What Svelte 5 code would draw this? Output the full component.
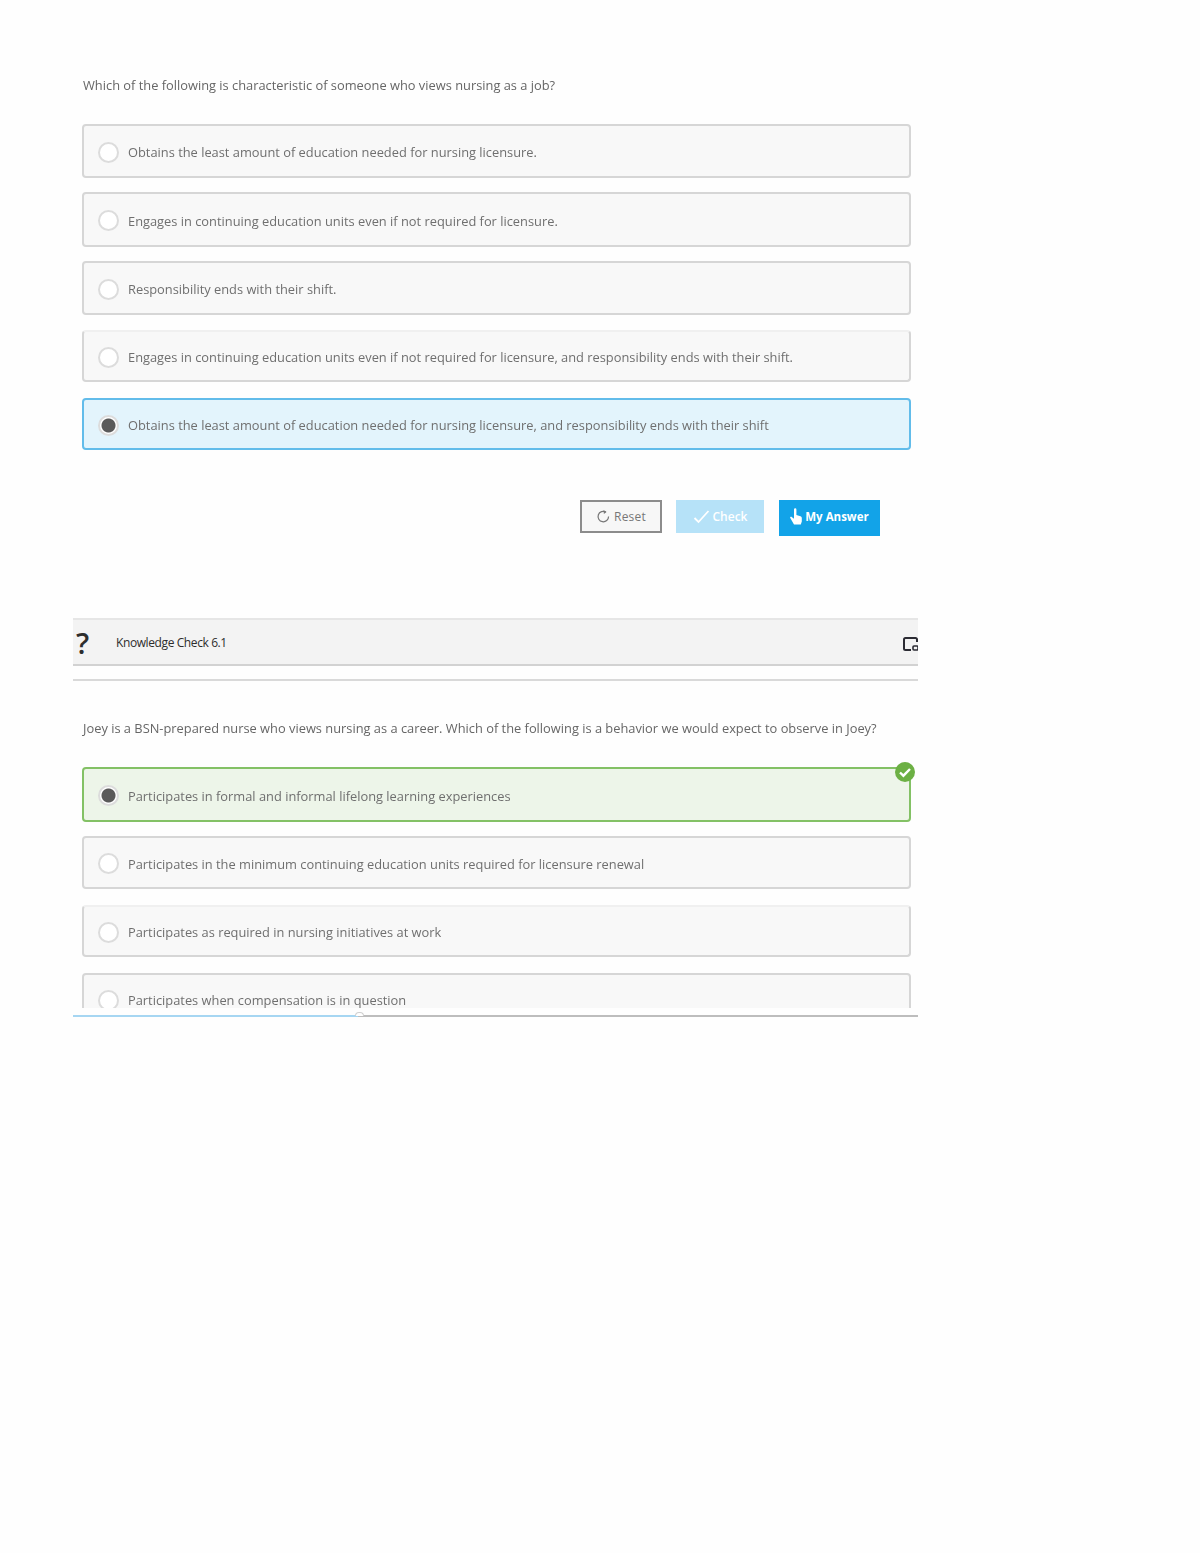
<script>
  const firstOptions = [
    { text: 'Obtains the least amount of education needed for nursing licensure.', size: 'tall' },
    { text: 'Engages in continuing education units even if not required for licensure.', size: 'taller' },
    { text: 'Responsibility ends with their shift.', size: 'tall' },
    { text: 'Engages in continuing education units even if not required for licensure, and responsibility ends with their shift.', size: 'short', extra: 'push-1', faint: true },
    { text: 'Obtains the least amount of education needed for nursing licensure, and responsibility ends with their shift', size: 'short', extra: 'push-2', state: 'selected' }
  ];

  const secondOptions = [
    { text: 'Participates in formal and informal lifelong learning experiences', size: 'taller', state: 'correct' },
    { text: 'Participates in the minimum continuing education units required for licensure renewal', size: 'mid' },
    { text: 'Participates as required in nursing initiatives at work', size: 'short', extra: 'push-2', faint: true },
    { text: 'Participates when compensation is in question', size: 'short', extra: 'push-2' }
  ];
</script>

{#snippet option(item)}
  <div class="option {item.size} {item.extra ?? ''} {item.state ?? ''}" class:faint={item.faint}>
    <span class="radio"></span>
    <span class="label">{item.text}</span>
    {#if item.state === 'correct'}
      <svg class="tick" viewBox="0 0 20 20" width="20" height="20">
        <circle cx="10" cy="10" r="10" fill="#6cb044" />
        <path d="M5 10.5l3.4 3.2L15 7" fill="none" stroke="#fff" stroke-width="2.4" />
      </svg>
    {/if}
  </div>
{/snippet}

<div class="page">
  <section class="question first">
    <p class="prompt">Which of the following is characteristic of someone who views nursing as a job?</p>
    <div class="options">
      {#each firstOptions as item}
        {@render option(item)}
      {/each}
    </div>
    <div class="actions">
      <button class="btn reset">
        <svg viewBox="0 0 16 16" width="15" height="15">
          <path d="M10.6 3.2A5.6 5.6 0 1 0 13.4 8" fill="none" stroke="#777" stroke-width="1.3" />
          <path d="M8 1l3.2 2.2L8.4 5.4z" fill="#777" />
        </svg>
        Reset
      </button>
      <button class="btn check">
        <svg viewBox="0 0 16 14" width="17" height="14">
          <path d="M1 8l4 4L15 1" fill="none" stroke="#fff" stroke-width="1.8" />
        </svg>
        Check
      </button>
      <button class="btn answer">
        <svg viewBox="0 0 12 17" width="12" height="17">
          <path d="M4 1.5a1.2 1.2 0 0 1 2.4 0V7l4 1.2c1 .3 1.4.9 1.4 1.8v3.5l-1 3H4l-4-7 1-1 3 2.2z" fill="#fff" />
        </svg>
        My Answer
      </button>
    </div>
  </section>

  <header class="bar">
    <span class="mark">?</span>
    <span class="title">Knowledge Check 6.1</span>
    <svg class="expand" viewBox="0 0 15 14" width="15" height="14">
      <path d="M14 5V2.5A1.5 1.5 0 0 0 12.500 1H2.500A1.500 1.500 0 0 0 1 2.500V11.500A1.500 1.500 0 0 0 2.500 13H8" fill="none" stroke="#2b2b33" stroke-width="2" />
      <rect x="10" y="9" width="5" height="4" rx="1" fill="none" stroke="#2b2b33" stroke-width="1.6" />
    </svg>
  </header>
  <div class="rule"></div>

  <section class="question second">
    <p class="prompt">Joey is a BSN-prepared nurse who views nursing as a career. Which of the following is a behavior we would expect to observe in Joey?</p>
    <div class="options clipped">
      {#each secondOptions as item}
        {@render option(item)}
      {/each}
    </div>
  </section>

  <div class="progress">
    <span class="done"></span>
    <span class="notch"></span>
  </div>
</div>

<style>
  :global(body) {
    margin: 0;
    background: #fefefe;
  }

  .page {
    width: 1200px;
    height: 1553px;
    padding: 78px 282px 0 73px;
    box-sizing: border-box;
    font-family: "Open Sans", "Liberation Sans", sans-serif;
    color: #666;
    overflow: hidden;
  }

  .question {
    padding: 0 7px 0 9px;
  }

  .prompt {
    margin: 0;
    padding-left: 1px;
    font-size: 12.85px;
    line-height: 15px;
    color: #666;
    white-space: nowrap;
    filter: blur(0.4px);
  }

  .options {
    display: flex;
    flex-direction: column;
    gap: 14px;
    margin-top: 31px;
  }

  .second {
    margin-top: 40px;
  }

  /* room for the tick, which sticks out of the first card */
  .second .options {
    height: 241px;
    margin: 23px -8px 0 0;
    padding: 8px 8px 0 0;
    overflow: hidden;
  }

  .option {
    position: relative;
    display: flex;
    flex: none;
    align-items: center;
    gap: 9px;
    padding: 2px 0 0 14px;
    box-sizing: border-box;
    background: #f8f8f8;
    border: 2px solid #d6d6d6;
    border-radius: 4px;
  }

  .tall {
    height: 54px;
  }

  .taller {
    height: 55px;
  }

  .mid {
    height: 53px;
  }

  .short {
    height: 52px;
  }

  .push-1 {
    margin-top: 1px;
  }

  .push-2 {
    margin-top: 2px;
  }

  .faint {
    border-top-color: #f0f0f0;
  }

  .selected {
    background: #e3f4fc;
    border-color: #62bcea;
  }

  .correct {
    background: #edf5e9;
    border-color: #83c165;
  }

  .radio {
    flex: none;
    width: 21px;
    height: 21px;
    box-sizing: border-box;
    background: #fff;
    border: 2px solid #dcdcdc;
    border-radius: 50%;
  }

  .selected .radio,
  .correct .radio {
    background: radial-gradient(circle, #595959 0 6.5px, #fff 7.5px);
  }

  .label {
    font-size: 12.85px;
    color: #6f6f6f;
    white-space: nowrap;
    filter: blur(0.4px);
  }

  .tick {
    position: absolute;
    top: -7px;
    right: -6px;
  }

  .actions {
    display: flex;
    align-items: flex-start;
    margin: 50px 0 0 498px;
    height: 118px;
  }

  .btn {
    display: flex;
    align-items: center;
    justify-content: center;
    gap: 3px;
    padding: 0;
    box-sizing: border-box;
    border: none;
    font-family: inherit;
    font-size: 12px;
  }

  .reset {
    width: 82px;
    height: 33px;
    background: #f7f7f7;
    border: 2px solid #8c8c8c;
    color: #777;
    letter-spacing: 0.2px;
  }

  .check {
    width: 88px;
    height: 33px;
    margin-left: 14px;
    background: #b6e2f8;
    color: #fff;
    font-weight: 600;
  }

  .answer {
    width: 101px;
    height: 36px;
    margin-left: 15px;
    padding-bottom: 4px;
    background: #12a3e8;
    color: #fff;
    font-size: 11.5px;
    font-weight: 700;
  }

  .bar {
    display: flex;
    align-items: center;
    height: 48px;
    box-sizing: border-box;
    background: #f3f3f3;
    border-top: 2px solid #e6e6e6;
    border-bottom: 2px solid #d2d2d2;
  }

  .mark {
    width: 43px;
    padding-left: 3px;
    box-sizing: border-box;
    font-size: 29px;
    font-weight: 600;
    line-height: 1;
    color: #2d2d2d;
  }

  .title {
    flex: 1;
    font-size: 12px;
    letter-spacing: -0.4px;
    color: #2d2d2d;
  }

  .expand {
    margin-top: 4px;
  }

  .rule {
    height: 2px;
    margin-top: 13px;
    background: #d9d9d9;
  }

  .progress {
    position: relative;
    height: 2px;
    margin-top: 7px;
    background: #bdbdbd;
  }

  .done {
    display: block;
    width: 285px;
    height: 2px;
    background: #a6d6f2;
  }

  .notch {
    position: absolute;
    left: 282px;
    top: -3px;
    width: 9px;
    height: 4px;
    box-sizing: border-box;
    background: #fff;
    border: 1px solid #cfcfcf;
    border-bottom: none;
    border-radius: 5px 5px 0 0;
  }
</style>
